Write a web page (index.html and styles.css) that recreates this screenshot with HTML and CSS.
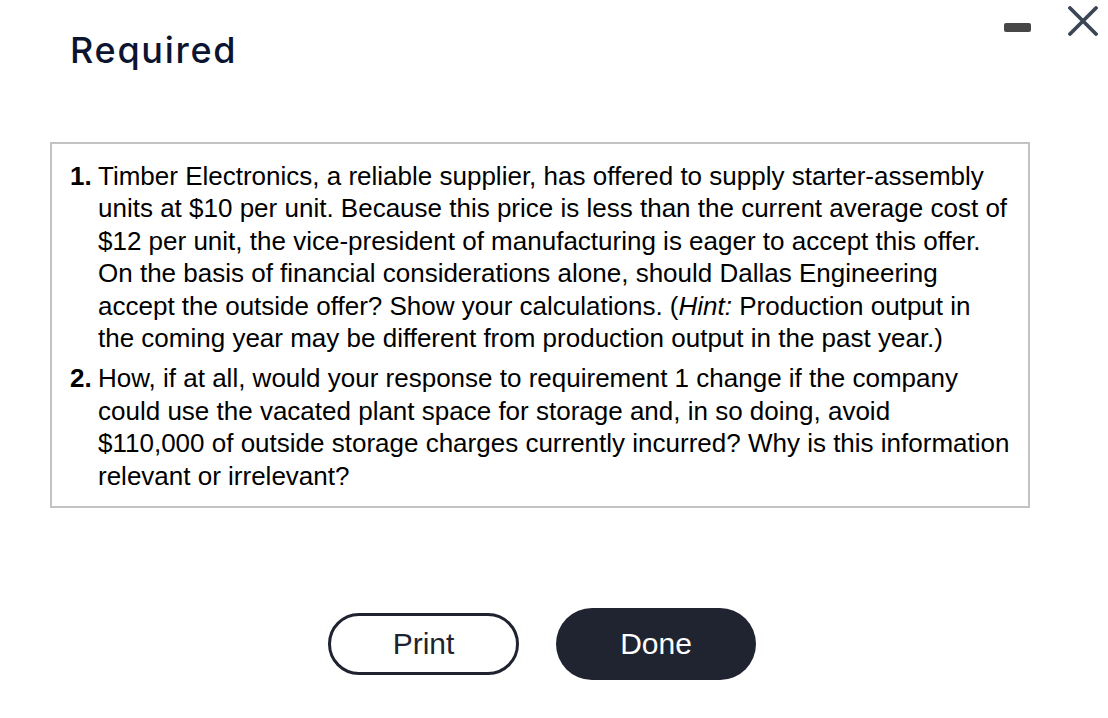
FILE: index.html
```html
<!DOCTYPE html>
<html lang="en">
<head>
<meta charset="utf-8">
<title>Required</title>
<link rel="stylesheet" href="styles.css">
</head>
<body>
<div class="dialog">
  <header class="top">
    <h1 class="title">Required</h1>
    <div class="controls">
      <button class="ctl minimize" aria-label="Minimize"><span class="dash"></span></button>
      <button class="ctl close" aria-label="Close">
        <svg width="30" height="30" viewBox="0 0 30 30"><path d="M2 2 L28 28 M28 2 L2 28" stroke="#3b4655" stroke-width="3.8" stroke-linecap="round" fill="none"/></svg>
      </button>
    </div>
  </header>
  <section class="box">
    <ol class="reqs">
      <li class="req"><span class="num">1.</span><span class="txt">Timber Electronics, a reliable supplier, has offered to supply starter-assembly units at $10 per unit. Because this price is less than the current average cost of $12 per unit, the vice-president of manufacturing is eager to accept this offer. On the basis of financial considerations alone, should Dallas Engineering accept the outside offer? Show your calculations. (<i>Hint:</i> Production output in the coming year may be different from production output in the past year.)</span></li>
      <li class="req"><span class="num">2.</span><span class="txt">How, if at all, would your response to requirement 1 change if the company could use the vacated plant space for storage and, in so doing, avoid<br>$110,000 of outside storage charges currently incurred? Why is this information relevant or irrelevant?</span></li>
    </ol>
  </section>
  <div class="actions">
    <button class="btn print">Print</button>
    <button class="btn done">Done</button>
  </div>
</div>
</body>
</html>
```

FILE: styles.css
```css
* { box-sizing: border-box; }
html, body { margin: 0; padding: 0; background: #fff; }
body { font-family: "Liberation Sans", Arial, Helvetica, sans-serif; color: #000; width: 1108px; height: 718px; overflow: hidden; }

.dialog { padding: 0 0 0 50px; width: 1108px; }

.top { display: flex; justify-content: space-between; align-items: flex-start; height: 142px; }
.title { margin: 32px 0 0 20px; font-family: Inter, "Liberation Sans", sans-serif; font-weight: 500; font-size: 36px; line-height: 36px; letter-spacing: 1.7px; color: #0c1530; }

.controls { display: flex; align-items: flex-start; padding-top: 6px; padding-right: 10px; }
.ctl { border: 0; background: none; padding: 0; margin: 0; cursor: pointer; display: flex; }
.minimize { width: 28px; height: 30px; align-items: center; margin-top: 13px; margin-right: 36px; }
.minimize .dash { display: block; width: 27px; height: 9px; background: #474747; border-radius: 2px; margin-top: -13px; }
.close { width: 30px; height: 30px; }

.box { width: 980px; border: 2px solid #c3c3c3; padding: 16px 17px 14px 18px; }
.reqs { list-style: none; margin: 0; padding: 0; font-size: 26px; line-height: 32.4px; }
.req { display: flex; }
.req + .req { margin-top: 8px; }
.num { width: 28px; flex: none; font-weight: 700; }
.txt { flex: 1; }

.actions { width: 980px; display: flex; justify-content: center; gap: 37px; align-items: center; margin-top: 100px; padding-left: 4px; }
.btn { font-family: "Liberation Sans", Arial, sans-serif; font-size: 30px; border-radius: 40px; cursor: pointer; }
.print { width: 191px; height: 62px; border: 3px solid #1f2330; background: #fff; color: #1f2330; }
.done { width: 200px; height: 72px; border: 0; background: #1f2430; color: #fff; }
```
